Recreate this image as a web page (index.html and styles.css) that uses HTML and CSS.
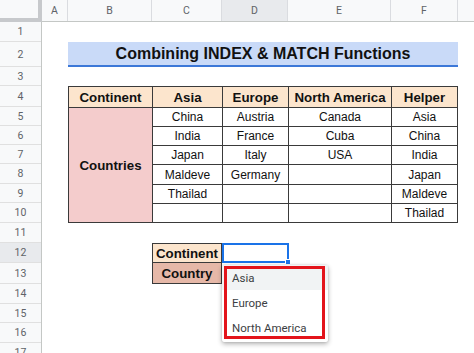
FILE: index.html
```html
<!DOCTYPE html>
<html>
<head>
<meta charset="utf-8">
<link rel="stylesheet" href="styles.css">
</head>
<body>
<div class="sheet">
  <div class="corner"></div>
  <div class="colheads">
    <div class="ch w-a">A</div>
    <div class="ch w-b">B</div>
    <div class="ch w-c">C</div>
    <div class="ch w-d ch-sel">D</div>
    <div class="ch w-e">E</div>
    <div class="ch w-f">F</div>
    <div class="ch w-g"></div>
  </div>
  <div class="rowheads">
    <div class="rh h20">1</div>
    <div class="rh h25">2</div>
    <div class="rh h19">3</div>
    <div class="rh h21">4</div>
    <div class="rh h19">5</div>
    <div class="rh h19">6</div>
    <div class="rh h19">7</div>
    <div class="rh h20">8</div>
    <div class="rh h19">9</div>
    <div class="rh h20">10</div>
    <div class="rh h20">11</div>
    <div class="rh h20 rh-sel">12</div>
    <div class="rh h21">13</div>
    <div class="rh h20">14</div>
    <div class="rh h19">15</div>
    <div class="rh h20">16</div>
    <div class="rh h20">17</div>
  </div>
  <div class="body">
    <div class="title">Combining INDEX &amp; MATCH Functions</div>
    <div class="table">
      <div class="th">Continent</div>
      <div class="th">Asia</div>
      <div class="th">Europe</div>
      <div class="th">North America</div>
      <div class="th">Helper</div>
      <div class="countries">Countries</div>
      <div class="td">China</div><div class="td">Austria</div><div class="td">Canada</div><div class="td">Asia</div>
      <div class="td">India</div><div class="td">France</div><div class="td">Cuba</div><div class="td">China</div>
      <div class="td">Japan</div><div class="td">Italy</div><div class="td">USA</div><div class="td">India</div>
      <div class="td">Maldeve</div><div class="td">Germany</div><div class="td"></div><div class="td">Japan</div>
      <div class="td">Thailad</div><div class="td"></div><div class="td"></div><div class="td">Maldeve</div>
      <div class="td"></div><div class="td"></div><div class="td"></div><div class="td">Thailad</div>
    </div>
    <div class="lbl lbl-continent">Continent</div>
    <div class="lbl lbl-country">Country</div>
    <div class="select"><span class="handle"></span></div>
    <div class="dropdown">
      <div class="opt opt-hover">Asia</div>
      <div class="opt">Europe</div>
      <div class="opt">North America</div>
      <div class="redbox"></div>
    </div>
  </div>
</div>
</body>
</html>
```

FILE: styles.css
```css
* { box-sizing: border-box; }
html, body { margin: 0; padding: 0; background: #fff; overflow: hidden; }
body { width: 474px; height: 353px; font-family: "Liberation Sans", Arial, sans-serif; }

.sheet {
  display: grid;
  grid-template-columns: 42px 432px;
  grid-template-rows: 22px 331px;
  width: 474px;
  height: 353px;
  overflow: hidden;
}

.corner {
  background: #f8f9fa;
  border-right: 4px solid #c7c9cc;
  border-bottom: 4px solid #c7c9cc;
}

.colheads {
  display: flex;
  background: #f8f9fa;
  border-bottom: 1px solid #c4c7c5;
}
.ch {
  flex: none;
  height: 21px;
  border-right: 1px solid #dadce0;
  display: flex;
  align-items: center;
  justify-content: center;
  font-family: Roboto, "Liberation Sans", sans-serif;
  font-size: 10.5px;
  color: #5f6368;
}
.ch-sel { background: #e8eaed; }
.w-a { width: 26px; }
.w-b { width: 84px; }
.w-c { width: 70px; }
.w-d { width: 66px; }
.w-e { width: 103px; }
.w-f { width: 67px; }
.w-g { width: 16px; border-right: none; }

.rowheads {
  display: flex;
  flex-direction: column;
  background: #f8f9fa;
  border-right: 1px solid #c4c7c5;
}
.rh {
  flex: none;
  border-bottom: 1px solid #e0e0e0;
  display: flex;
  align-items: center;
  justify-content: center;
  font-family: Roboto, "Liberation Sans", sans-serif;
  font-size: 10.5px;
  color: #5f6368;
}
.rh-sel { background: #e8eaed; }
.h19 { height: 19px; }
.h20 { height: 20px; }
.h21 { height: 21px; }
.h25 { height: 25px; }

.body {
  display: grid;
  grid-template-columns: 26px 84px 70px 66px 103px 67px 16px;
  grid-template-rows: 20px 25px 19px 21px 19px 19px 19px 20px 19px 20px 20px 20px 21px 20px 19px 20px 20px;
}

.title {
  grid-row: 2;
  grid-column: 2 / 7;
  background: #c9daf8;
  border-bottom: 2px solid #3c78d8;
  display: flex;
  align-items: center;
  justify-content: center;
  font-weight: bold;
  font-size: 16px;
  color: #111;
  padding-top: 1px;
}

.table {
  grid-row: 4 / 11;
  grid-column: 2 / 7;
  display: grid;
  grid-template-columns: 83px 69px 65px 102px 65px;
  grid-template-rows: 20px 18px 18px 18px 19px 18px 18px;
  gap: 1px;
  padding: 1px;
  background: #3a3a3a;
  width: 390px;
}
.th {
  background: #fce5cd;
  display: flex;
  align-items: center;
  justify-content: center;
  font-weight: bold;
  font-size: 13.3px;
  color: #111;
}
.countries {
  grid-row: 2 / 8;
  grid-column: 1;
  background: #f4cccc;
  display: flex;
  align-items: center;
  justify-content: center;
  font-weight: bold;
  font-size: 13.3px;
  color: #111;
}
.td {
  background: #fff;
  display: flex;
  align-items: center;
  justify-content: center;
  font-size: 12px;
  color: #111;
}

.lbl {
  grid-column: 3;
  display: flex;
  align-items: center;
  justify-content: center;
  font-weight: bold;
  font-size: 13.3px;
  color: #111;
  border: 1px solid #3a3a3a;
}
.lbl-continent { grid-row: 12; background: #fce5cd; }
.lbl-country { grid-row: 13; background: #e6b8a8; border-top: none; }

.select {
  grid-row: 12;
  grid-column: 4;
  width: 67px;
  border: 2px solid #1a73e8;
  position: relative;
}
.handle {
  position: absolute;
  right: -4px;
  bottom: -4px;
  width: 6px;
  height: 6px;
  background: #1a73e8;
  border: 1px solid #fff;
}

.dropdown {
  grid-row: 13;
  grid-column: 4;
  align-self: start;
  justify-self: start;
  margin-top: 2px;
  width: 106px;
  height: 77px;
  background: #fff;
  border-radius: 2px;
  box-shadow: 0 2px 5px rgba(0, 0, 0, 0.3), 0 0 2px rgba(0, 0, 0, 0.15);
  position: relative;
  z-index: 2;
  display: flex;
  flex-direction: column;
}
.opt {
  height: 25px;
  flex: none;
  display: flex;
  align-items: center;
  padding-left: 10px;
  font-family: Roboto, "Liberation Sans", sans-serif;
  font-size: 11.5px;
  color: #3c4043;
}
.opt-hover { background: #f1f3f4; }
.redbox {
  position: absolute;
  left: 2px;
  top: 1px;
  right: 3px;
  bottom: 3px;
  border: 3px solid #e3141b;
}
```
